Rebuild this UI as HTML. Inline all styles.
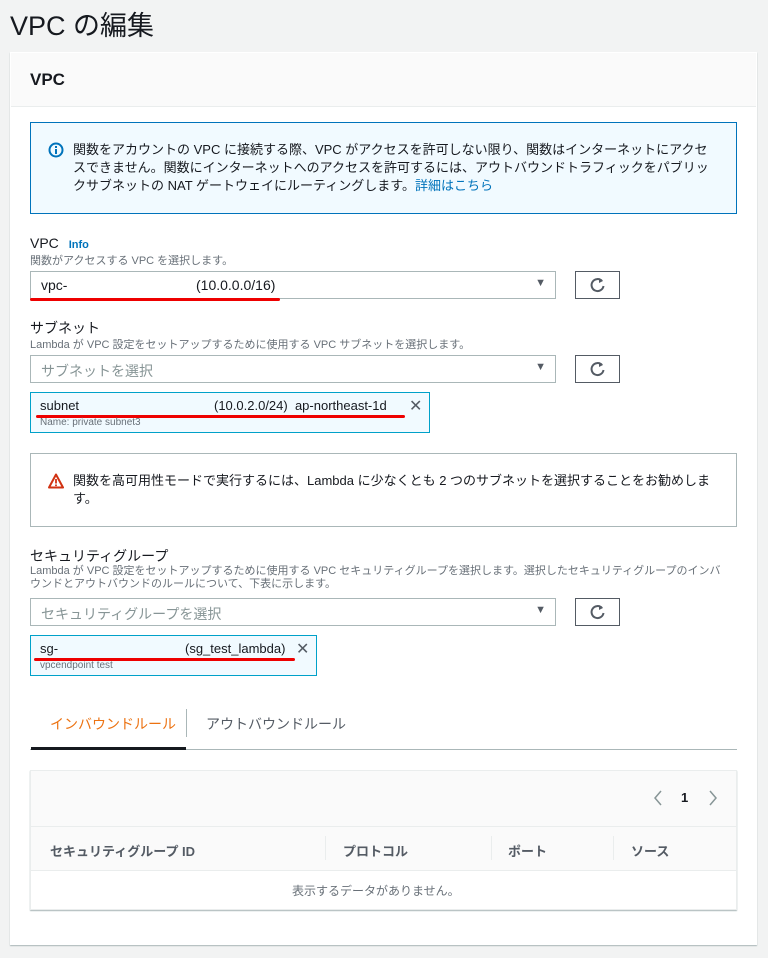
<!DOCTYPE html>
<html><head><meta charset="utf-8"><style>
*{box-sizing:border-box;margin:0;padding:0}
body{width:768px;height:958px;background:#f2f3f3;font-family:"Liberation Sans","Noto Sans CJK JP",sans-serif;color:#16191f;position:relative;overflow:hidden}
.a{position:absolute;white-space:nowrap}
.sel{position:absolute;left:30px;width:526px;height:28px;background:#fff;border:1px solid #aab7b8;font-size:14px;padding:5px 10px}
.sel .ar{position:absolute;right:9px;top:5px;font-size:11px;color:#545b64}
.rb{position:absolute;left:575px;width:45px;height:28px;border:1px solid #545b64;background:#fff}
.tok{position:absolute;left:30px;background:#f1faff;border:1px solid #00a1c9;height:41px}
.red{position:absolute;height:3px;background:#e00;border-radius:2px}
.lab{font-size:14px}
.desc{font-size:11px;color:#687078}
</style></head><body>
<div class="a" style="left:10px;top:4px;font-size:27px">VPC の編集</div>
<div class="a" style="left:10px;top:52px;width:747px;height:893px;background:#fff;box-shadow:0 1px 1px #aab7b8"></div>
<div class="a" style="left:11px;top:53px;width:745px;height:54px;background:#fafafa;border-bottom:1px solid #eaeded"></div>
<div class="a" style="left:30px;top:70px;font-size:17px;font-weight:bold">VPC</div>
<div class="a" style="left:30px;top:122px;width:707px;height:92px;background:#f1faff;border:1px solid #0073bb"></div>
<svg class="a" style="left:48px;top:142px" width="16" height="16"><circle cx="8" cy="8" r="6.5" fill="none" stroke="#0073bb" stroke-width="2"/><rect x="7" y="7" width="2" height="5" fill="#0073bb"/><rect x="7" y="4" width="2" height="2" fill="#0073bb"/></svg>
<div class="a" style="left:73px;top:141px;font-size:13px;line-height:18px;color:#16191f">関数をアカウントの VPC に接続する際、VPC がアクセスを許可しない限り、関数はインターネットにアクセ<br>スできません。関数にインターネットへのアクセスを許可するには、アウトバウンドトラフィックをパブリッ<br>クサブネットの NAT ゲートウェイにルーティングします。<span style="color:#0073bb">詳細はこちら</span></div>
<div class="a lab" style="left:30px;top:235px">VPC <span style="color:#0073bb;font-size:11px;font-weight:bold;margin-left:6px">Info</span></div>
<div class="a desc" style="left:30px;top:252px">関数がアクセスする VPC を選択します。</div>
<div class="sel" style="top:271px">vpc-<span style="position:absolute;left:165px">(10.0.0.0/16)</span><span class="ar">▼</span></div>
<div class="rb" style="top:271px"></div>
<div class="red" style="left:30px;top:298px;width:250px"></div>
<div class="a lab" style="left:30px;top:318px">サブネット</div>
<div class="a desc" style="left:30px;top:336px">Lambda が VPC 設定をセットアップするために使用する VPC サブネットを選択します。</div>
<div class="sel" style="top:355px;color:#879596">サブネットを選択<span class="ar">▼</span></div>
<div class="rb" style="top:355px"></div>
<div class="tok" style="top:392px;width:400px"></div>
<div class="a" style="left:40px;top:398px;font-size:13px">subnet</div>
<div class="a" style="left:214px;top:398px;font-size:13px">(10.0.2.0/24)&nbsp; ap-northeast-1d</div>
<div class="a" style="left:409px;top:396px;font-size:16px;color:#545b64">✕</div>
<div class="red" style="left:36px;top:415px;width:369px"></div>
<div class="a desc" style="left:40px;top:417px;font-size:10px">Name: private subnet3</div>
<div class="a" style="left:30px;top:453px;width:707px;height:74px;border:1px solid #aab7b8;background:#fff"></div>
<svg class="a" style="left:48px;top:473px" width="16" height="16"><path d="M8 1.5L15 14.5H1Z" fill="none" stroke="#d13212" stroke-width="2" stroke-linejoin="round"/><rect x="7.1" y="6" width="1.8" height="4.5" fill="#d13212"/><rect x="7.1" y="11.5" width="1.8" height="1.6" fill="#d13212"/></svg>
<div class="a" style="left:73px;top:472px;font-size:13px;line-height:18px">関数を高可用性モードで実行するには、Lambda に少なくとも 2 つのサブネットを選択することをお勧めしま<br>す。</div>
<div class="a lab" style="left:30px;top:546px">セキュリティグループ</div>
<div class="a desc" style="left:30px;top:565px;line-height:13px">Lambda が VPC 設定をセットアップするために使用する VPC セキュリティグループを選択します。選択したセキュリティグループのインバ<br>ウンドとアウトバウンドのルールについて、下表に示します。</div>
<div class="sel" style="top:598px;color:#879596">セキュリティグループを選択<span class="ar">▼</span></div>
<div class="rb" style="top:598px"></div>
<div class="tok" style="top:635px;width:287px"></div>
<div class="a" style="left:40px;top:641px;font-size:13px">sg-</div>
<div class="a" style="left:185px;top:641px;font-size:13px">(sg_test_lambda)</div>
<div class="a" style="left:296px;top:639px;font-size:16px;color:#545b64">✕</div>
<div class="a desc" style="left:40px;top:660px;font-size:10px">vpcendpoint test</div>
<div class="red" style="left:34px;top:658px;width:261px"></div>
<svg class="a" style="left:589px;top:276px" width="18" height="18"><path d="M13 5A6 6 0 1 0 14.5 10" fill="none" stroke="#545b64" stroke-width="2"/><path d="M10 2L14 5L10 7Z" fill="#545b64"/></svg>
<svg class="a" style="left:589px;top:360px" width="18" height="18"><path d="M13 5A6 6 0 1 0 14.5 10" fill="none" stroke="#545b64" stroke-width="2"/><path d="M10 2L14 5L10 7Z" fill="#545b64"/></svg>
<svg class="a" style="left:589px;top:603px" width="18" height="18"><path d="M13 5A6 6 0 1 0 14.5 10" fill="none" stroke="#545b64" stroke-width="2"/><path d="M10 2L14 5L10 7Z" fill="#545b64"/></svg>
<div class="a" style="left:50px;top:714px;font-size:14px;color:#ec7211">インバウンドルール</div>
<div class="a" style="left:186px;top:709px;width:1px;height:28px;background:#aab7b8"></div>
<div class="a" style="left:206px;top:714px;font-size:14px;color:#545b64">アウトバウンドルール</div>
<div class="a" style="left:30px;top:749px;width:707px;height:1px;background:#aab7b8"></div>
<div class="a" style="left:31px;top:747px;width:155px;height:3px;background:#16191f"></div>
<div class="a" style="left:30px;top:770px;width:707px;height:140px;background:#fff;border:1px solid #eaeded;box-shadow:0 1px 1px #aab7b8"></div>
<div class="a" style="left:31px;top:771px;width:705px;height:100px;background:#fafafa;border-bottom:1px solid #eaeded"></div>
<svg class="a" style="left:652px;top:789px" width="12" height="18"><path d="M9 2L3 9L9 16" fill="none" stroke="#879596" stroke-width="1.5"/></svg>
<div class="a" style="left:681px;top:790px;font-size:13px;font-weight:bold">1</div>
<svg class="a" style="left:707px;top:789px" width="12" height="18"><path d="M3 2L9 9L3 16" fill="none" stroke="#879596" stroke-width="1.5"/></svg>
<div class="a" style="left:31px;top:826px;width:705px;height:1px;background:#eaeded"></div>
<div class="a" style="left:50px;top:841px;font-size:13px;font-weight:bold;color:#545b64">セキュリティグループ ID</div>
<div class="a" style="left:325px;top:836px;width:1px;height:24px;background:#eaeded"></div>
<div class="a" style="left:343px;top:841px;font-size:13px;font-weight:bold;color:#545b64">プロトコル</div>
<div class="a" style="left:491px;top:836px;width:1px;height:24px;background:#eaeded"></div>
<div class="a" style="left:508px;top:841px;font-size:13px;font-weight:bold;color:#545b64">ポート</div>
<div class="a" style="left:613px;top:836px;width:1px;height:24px;background:#eaeded"></div>
<div class="a" style="left:631px;top:841px;font-size:13px;font-weight:bold;color:#545b64">ソース</div>
<div class="a" style="left:292px;top:882px;font-size:12px;color:#687078">表示するデータがありません。</div>
</body></html>
